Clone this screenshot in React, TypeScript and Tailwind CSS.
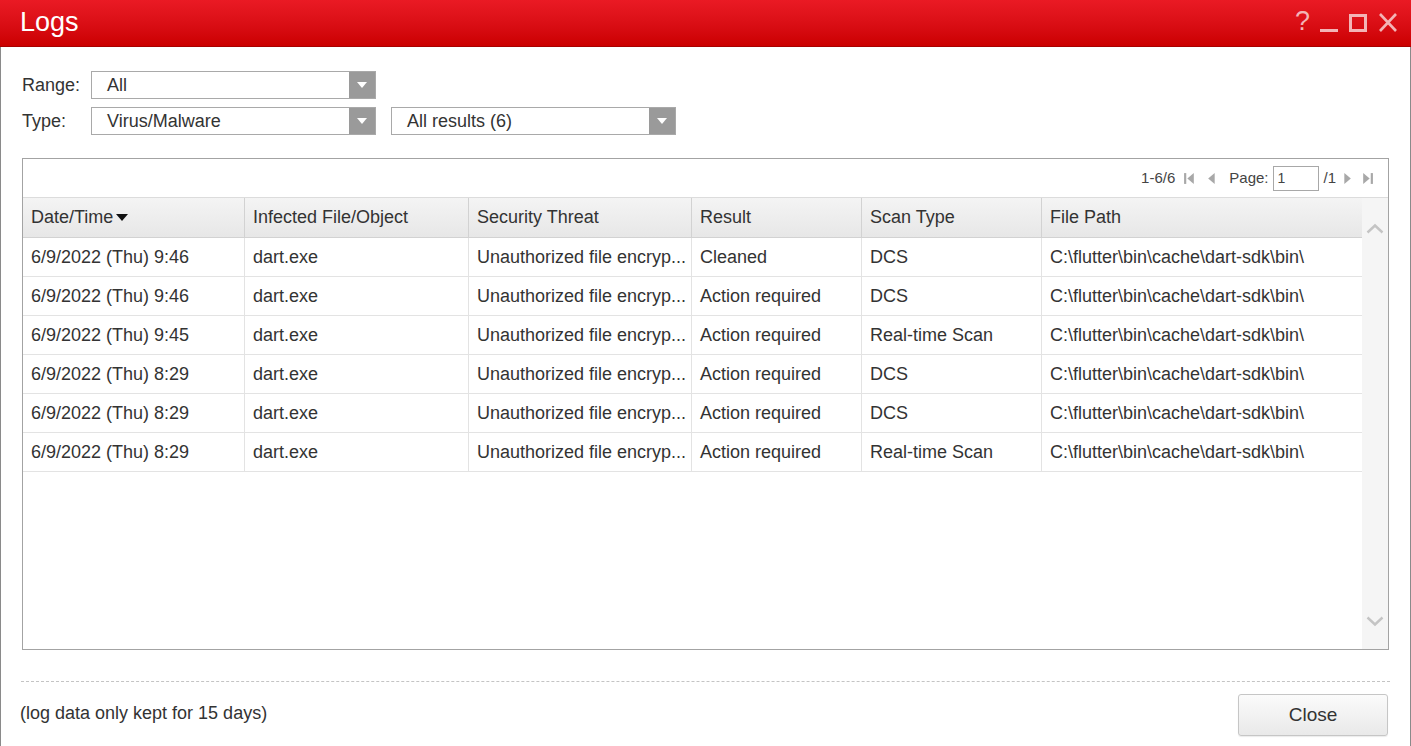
import React from "react";

const rows = [
  { time: "6/9/2022 (Thu) 9:46", result: "Cleaned", scan: "DCS" },
  { time: "6/9/2022 (Thu) 9:46", result: "Action required", scan: "DCS" },
  { time: "6/9/2022 (Thu) 9:45", result: "Action required", scan: "Real-time Scan" },
  { time: "6/9/2022 (Thu) 8:29", result: "Action required", scan: "DCS" },
  { time: "6/9/2022 (Thu) 8:29", result: "Action required", scan: "DCS" },
  { time: "6/9/2022 (Thu) 8:29", result: "Action required", scan: "Real-time Scan" },
];

const cols = [
  { label: "Date/Time", w: "w-[222px]" },
  { label: "Infected File/Object", w: "w-[224px]" },
  { label: "Security Threat", w: "w-[223px]" },
  { label: "Result", w: "w-[170px]" },
  { label: "Scan Type", w: "w-[180px]" },
  { label: "File Path", w: "flex-1" },
];

const Select = ({ value, width }: { value: string; width: string }) => (
  <div className={`flex h-[28px] ${width} border border-[#a9a9a9] bg-white`}>
    <div className="flex-1 pl-[15px] flex items-center text-[#333]">{value}</div>
    <div className="w-[26px] bg-[#9a9a9a] flex items-center justify-center">
      <svg width="10" height="6" viewBox="0 0 10 6">
        <path d="M0 0 L10 0 L5 6 Z" fill="#fff" />
      </svg>
    </div>
  </div>
);

const PagerIcon = ({ kind }: { kind: "first" | "prev" | "next" | "last" }) => (
  <svg width="13" height="13" viewBox="0 0 12 12" className="shrink-0">
    {kind === "first" && (
      <>
        <rect x="1" y="1" width="2" height="10" fill="#a8a8a8" />
        <path d="M10 1 L4 6 L10 11 Z" fill="#a8a8a8" />
      </>
    )}
    {kind === "prev" && <path d="M8 1 L2 6 L8 11 Z" fill="#a8a8a8" />}
    {kind === "next" && <path d="M4 1 L10 6 L4 11 Z" fill="#a8a8a8" />}
    {kind === "last" && (
      <>
        <path d="M2 1 L8 6 L2 11 Z" fill="#a8a8a8" />
        <rect x="9" y="1" width="2" height="10" fill="#a8a8a8" />
      </>
    )}
  </svg>
);

export default function App() {
  return (
    <div
      className="w-[1411px] h-[746px] flex flex-col bg-white overflow-hidden"
      style={{ fontFamily: '"Liberation Sans", Arial, sans-serif' }}
    >
      {/* Title bar */}
      <div className="h-[47px] shrink-0 flex items-center justify-between bg-gradient-to-b from-[#ea1a24] to-[#cb0000] border-b border-[#a80000] pl-[20px] pr-[12px]">
        <span className="text-white text-[27px] leading-none pb-[2px]">Logs</span>
        <div className="flex items-center gap-[9px] text-[#f3b4b6]">
          <span className="text-[27px] leading-none pb-[3px]">?</span>
          <svg width="20" height="24" viewBox="0 0 20 24">
            <rect x="1" y="18" width="18" height="3" fill="currentColor" />
          </svg>
          <svg width="20" height="24" viewBox="0 0 20 24">
            <rect x="2.5" y="4.5" width="15" height="15" fill="none" stroke="currentColor" strokeWidth="3" />
          </svg>
          <svg width="22" height="24" viewBox="0 0 22 24">
            <path d="M3 3 L19 20 M19 3 L3 20" stroke="currentColor" strokeWidth="2.6" />
          </svg>
        </div>
      </div>

      {/* Body */}
      <div className="flex-1 flex flex-col border-x border-[#8a8a8a] pl-[21px] pr-[21px] text-[#333] text-[18px]">
        <div className="mt-[24px] flex flex-col gap-[8px]">
          <div className="flex items-center">
            <span className="w-[69px]">Range:</span>
            <Select value="All" width="w-[285px]" />
          </div>
          <div className="flex items-center">
            <span className="w-[69px]">Type:</span>
            <Select value="Virus/Malware" width="w-[285px]" />
            <div className="ml-[15px]">
              <Select value="All results (6)" width="w-[285px]" />
            </div>
          </div>
        </div>

        {/* Table panel */}
        <div className="mt-[23px] h-[492px] border border-[#a3a3a3] flex flex-col">
          <div className="h-[39px] shrink-0 flex items-center justify-end pr-[14px] text-[15px] text-[#444] border-b border-[#dcdcdc]">
            <span className="mr-[8px]">1-6/6</span>
            <PagerIcon kind="first" />
            <span className="w-[10px]" />
            <PagerIcon kind="prev" />
            <span className="ml-[10px]">Page:</span>
            <div className="ml-[5px] w-[46px] h-[25px] border border-[#a8a8a8] flex items-center pl-[3px] text-[14px]">1</div>
            <span className="ml-[4px] mr-[4px]">/1</span>
            <PagerIcon kind="next" />
            <span className="w-[8px]" />
            <PagerIcon kind="last" />
          </div>

          <div className="flex-1 flex">
            <div className="flex-1 flex flex-col">
              <div className="h-[40px] flex bg-gradient-to-b from-[#f4f4f4] to-[#e7e7e7] border-b border-[#d2d2d2]">
                {cols.map((c, i) => (
                  <div
                    key={c.label}
                    className={`${c.w} flex items-center pl-[8px] ${i < cols.length - 1 ? "border-r border-[#d2d2d2]" : ""}`}
                  >
                    {c.label}
                    {i === 0 && (
                      <svg width="12" height="7" viewBox="0 0 12 7" className="ml-[3px]">
                        <path d="M0 0 L12 0 L6 7 Z" fill="#111" />
                      </svg>
                    )}
                  </div>
                ))}
              </div>
              {rows.map((r, idx) => (
                <div key={idx} className="h-[39px] flex border-b border-[#e3e3e3]">
                  {[r.time, "dart.exe", "Unauthorized file encryp...", r.result, r.scan, "C:\\flutter\\bin\\cache\\dart-sdk\\bin\\"].map(
                    (v, i) => (
                      <div
                        key={i}
                        className={`${cols[i].w} flex items-center pl-[8px] whitespace-nowrap overflow-hidden ${i < cols.length - 1 ? "border-r border-[#e3e3e3]" : ""}`}
                      >
                        {v}
                      </div>
                    )
                  )}
                </div>
              ))}
            </div>
            <div className="w-[26px] bg-[#f5f5f5] flex flex-col items-center justify-between pt-[25px] pb-[22px]">
              <svg width="18" height="11" viewBox="0 0 18 11">
                <path d="M1.5 9.5 L9 2.5 L16.5 9.5" fill="none" stroke="#c4c4c4" strokeWidth="2.4" />
              </svg>
              <svg width="18" height="11" viewBox="0 0 18 11">
                <path d="M1.5 1.5 L9 8.5 L16.5 1.5" fill="none" stroke="#c4c4c4" strokeWidth="2.4" />
              </svg>
            </div>
          </div>
        </div>

        <div className="mt-[31px] -mx-[1px] border-t border-dashed border-[#c4c4c4]" />

        <div className="mt-[12px] flex items-center justify-between">
          <span className="-ml-[2px] pb-[4px]">(log data only kept for 15 days)</span>
          <button className="w-[150px] h-[42px] mr-[1px] rounded-[3px] border border-[#c6c6c6] bg-gradient-to-b from-[#fbfbfb] to-[#e9e9e9] text-[19px] text-[#333] shadow-[0_1px_1px_rgba(0,0,0,0.08)]">
            Close
          </button>
        </div>
      </div>
    </div>
  );
}
